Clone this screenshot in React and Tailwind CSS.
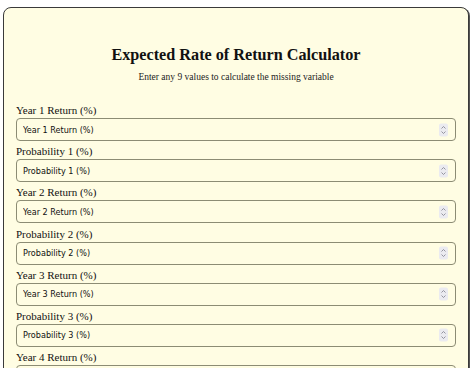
import React, { useState } from 'react';

const fields = [
  'Year 1 Return (%)',
  'Probability 1 (%)',
  'Year 2 Return (%)',
  'Probability 2 (%)',
  'Year 3 Return (%)',
  'Probability 3 (%)',
  'Year 4 Return (%)',
  'Probability 4 (%)',
  'Year 5 Return (%)',
  'Probability 5 (%)',
];

// little up/down stepper like the browser's number spinner
const Spinner = () => (
  <span className="absolute right-[8px] top-1/2 -translate-y-1/2 flex h-[13px] w-[9px] items-center justify-center rounded-[2px] bg-[#ebebf0]">
    <svg width="7" height="11" viewBox="0 0 7 11" fill="none" stroke="#8a8a95" strokeWidth="0.9">
      <path d="M1.5 4 L3.5 2 L5.5 4" />
      <path d="M1.5 7 L3.5 9 L5.5 7" />
    </svg>
  </span>
);

const App = () => {
  const [values, setValues] = useState({});

  return (
    <div className="bg-white min-h-screen pt-[7px] pl-[3px] pr-[5px]" style={{ fontFamily: '"Liberation Serif", serif' }}>
      <div className="border border-[#3a3a3a] rounded-lg bg-[#fffde3] shadow-[1px_1px_0_#555] px-3 pt-[35px] pb-6">
        <h1 className="text-center font-bold text-[16.2px] text-[#111] leading-6">Expected Rate of Return Calculator</h1>
        <p className="text-center text-[9.5px] text-[#222] leading-[14px] mt-[3px] mb-[18px]">Enter any 9 values to calculate the missing variable</p>

        <div className="flex flex-col">
          {fields.map((f) => (
            <div key={f} className="flex flex-col mb-[2.2px]">
              <label className="text-[11px] text-[#111] leading-[16px]">{f}</label>
              <div className="relative">
                <input
                  type="text"
                  inputMode="decimal"
                  placeholder={f}
                  value={values[f] || ''}
                  onChange={(e) => setValues({ ...values, [f]: e.target.value })}
                  className="block h-[23px] w-full rounded border border-[#8c8c74] bg-transparent pl-[6px] pr-[24px] text-[9px] text-[#111] placeholder:text-[#111] outline-none"
                  style={{ fontFamily: '"DejaVu Sans Condensed", "DejaVu Sans", sans-serif' }}
                />
                <Spinner />
              </div>
            </div>
          ))}
        </div>
      </div>
    </div>
  );
};

export default App;
